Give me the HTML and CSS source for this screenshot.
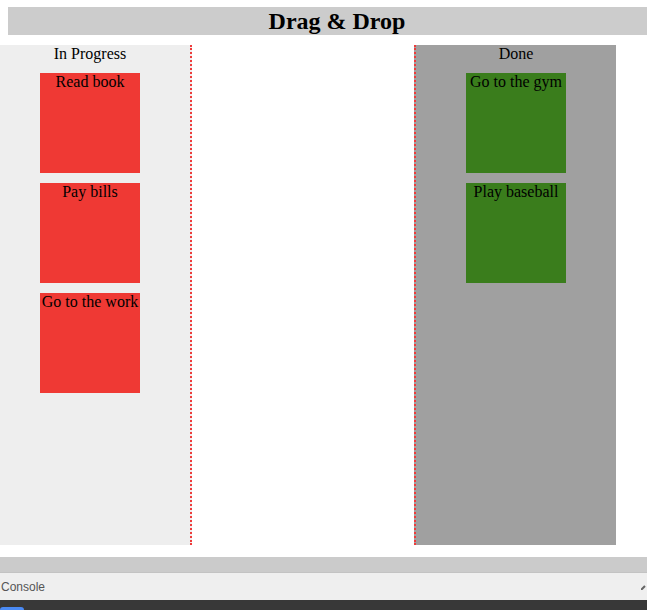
FILE: index.html
```html
<!DOCTYPE html>
<html lang="en">
<head>
<meta charset="utf-8">
<title>Drag &amp; Drop</title>
<link rel="stylesheet" href="styles.css">
</head>
<body>
<div class="page">
  <h1 class="title">Drag &amp; Drop</h1>
  <div class="board">
    <section class="column progress">
      <div class="column-title">In Progress</div>
      <div class="card red">Read book</div>
      <div class="card red">Pay bills</div>
      <div class="card red">Go to the work</div>
    </section>
    <div class="spacer"></div>
    <section class="column done">
      <div class="column-title">Done</div>
      <div class="card green">Go to the gym</div>
      <div class="card green">Play baseball</div>
    </section>
  </div>
</div>
<div class="devtools">
  <div class="resizer"></div>
  <div class="console-bar">
    <span class="console-label">Console</span>
    <svg class="expand" width="6" height="6" viewBox="0 0 6 6"><path d="M0 6 L4 2" stroke="#666" stroke-width="2"/></svg>
  </div>
  <div class="dock"><span class="dock-btn"></span></div>
</div>
</body>
</html>
```
FILE: styles.css
```css
html, body {
  margin: 0;
  padding: 0;
  overflow: hidden;
  background: #fff;
  font-family: "Liberation Serif", "Times New Roman", serif;
}
.page {
  height: 557px;
  padding-top: 7px;
  box-sizing: border-box;
  overflow: hidden;
}
.title {
  margin: 0 0 0 8px;
  width: 658px;
  height: 28px;
  line-height: 28px;
  background: #cccccc;
  font-size: 24px;
  font-weight: bold;
  text-align: center;
  color: #000;
}
.board {
  display: flex;
  margin-top: 10px;
  margin-left: -10px;
  height: 500px;
}
.column {
  width: 200px;
  height: 500px;
  display: flex;
  flex-direction: column;
  align-items: center;
  font-size: 16px;
  color: #000;
}
.progress {
  background: #eeeeee;
  border-right: 2px dotted #ee3b3b;
}
.done {
  background: #a0a0a0;
  border-left: 2px dotted #ee3b3b;
}
.spacer {
  width: 222px;
}
.column-title {
  height: 18px;
  line-height: 18px;
  margin-bottom: 10px;
}
.card {
  width: 100px;
  height: 100px;
  margin-bottom: 10px;
  text-align: center;
  line-height: 18px;
  white-space: nowrap;
}
.red { background: #ef3934; }
.green { background: #3a7d1c; }
.devtools {
  height: 53px;
  display: flex;
  flex-direction: column;
}
.resizer {
  height: 16px;
  background: #cbcbcb;
  border-bottom: 1px solid #c3c3c3;
  box-sizing: border-box;
}
.console-bar {
  height: 27px;
  background: #efefef;
  display: flex;
  align-items: center;
  justify-content: space-between;
  font-family: "Liberation Sans", Arial, sans-serif;
  font-size: 12px;
  color: #555;
}
.console-label { padding-left: 1px; }
.expand { margin-right: 0; margin-top: 1px; }
.dock {
  height: 10px;
  background: #383838;
  position: relative;
}
.dock-btn {
  position: absolute;
  left: 0;
  top: 7px;
  width: 24px;
  height: 6px;
  background: #4a8af4;
  border-radius: 3px 3px 0 0;
}
```
